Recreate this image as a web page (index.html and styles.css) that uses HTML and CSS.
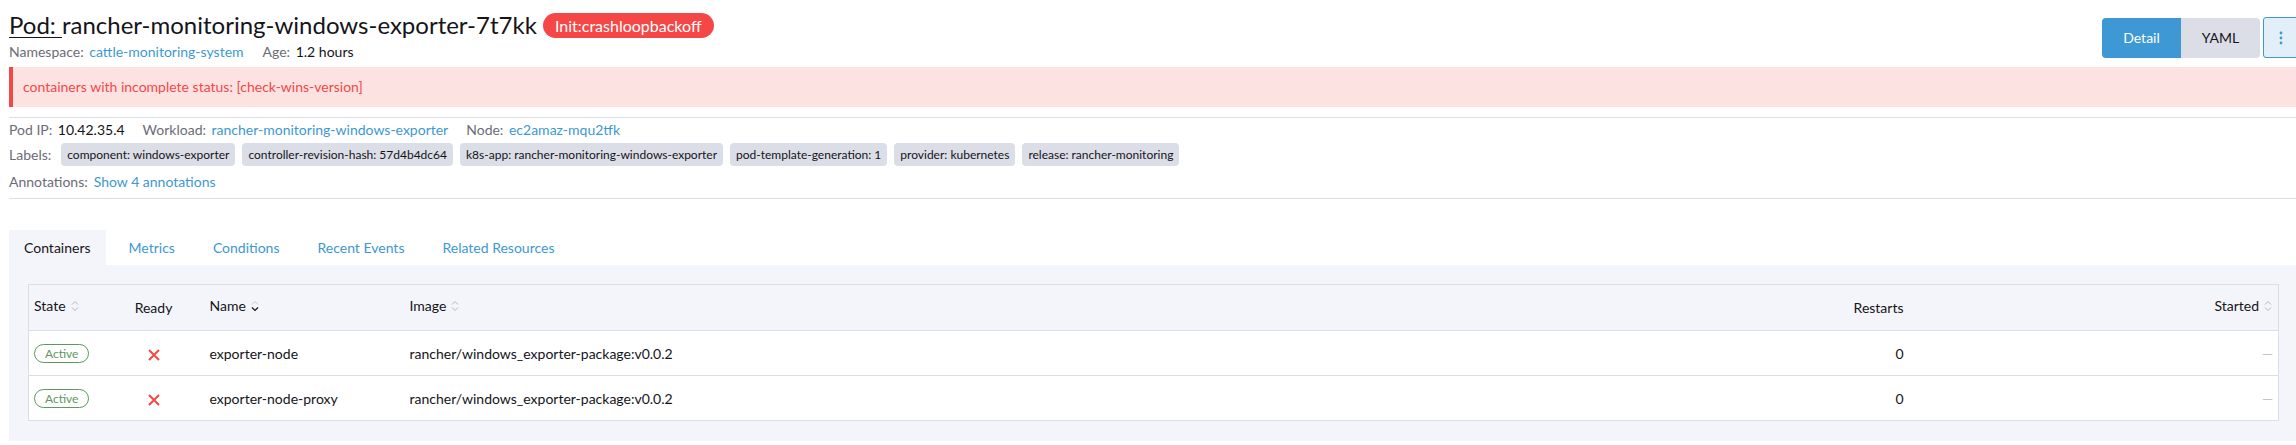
FILE: index.html
```html
<!DOCTYPE html>
<html lang="en">
<head>
<meta charset="utf-8">
<title>Pod: rancher-monitoring-windows-exporter-7t7kk</title>
<link rel="stylesheet" href="styles.css">
</head>
<body>
<div class="page">
  <header class="masthead">
    <div class="title-block">
      <h1 class="title"><a class="kind" href="#">Pod: </a>rancher-monitoring-windows-exporter-7t7kk<span class="badge">Init:crashloopbackoff</span></h1>
      <div class="subline">
        <span class="item"><span class="lbl">Namespace:</span> <a class="link" href="#">cattle-monitoring-system</a></span>
        <span class="item"><span class="lbl">Age:</span> 1.2 hours</span>
      </div>
    </div>
    <div class="actions">
      <div class="btn-group">
        <button class="seg seg-active">Detail</button>
        <button class="seg">YAML</button>
      </div>
      <button class="kebab" aria-label="More actions">
        <svg width="4" height="14" viewBox="0 0 4 14"><circle cx="2" cy="2" r="1.4" fill="#3d98d3"/><circle cx="2" cy="7" r="1.4" fill="#3d98d3"/><circle cx="2" cy="12" r="1.4" fill="#3d98d3"/></svg>
      </button>
    </div>
  </header>

  <div class="banner">containers with incomplete status: [check-wins-version]</div>

  <div class="rule"></div>

  <div class="details">
    <div class="drow">
      <span class="item"><span class="lbl">Pod IP:</span> <span>10.42.35.4</span></span>
      <span class="item"><span class="lbl">Workload:</span> <a class="link" href="#">rancher-monitoring-windows-exporter</a></span>
      <span class="item"><span class="lbl">Node:</span> <a class="link" href="#">ec2amaz-mqu2tfk</a></span>
    </div>
    <div class="drow labels">
      <span class="lbl">Labels:</span>
      <span class="chip">component: windows-exporter</span>
      <span class="chip">controller-revision-hash: 57d4b4dc64</span>
      <span class="chip">k8s-app: rancher-monitoring-windows-exporter</span>
      <span class="chip">pod-template-generation: 1</span>
      <span class="chip">provider: kubernetes</span>
      <span class="chip">release: rancher-monitoring</span>
    </div>
    <div class="drow annotations">
      <span class="lbl">Annotations:</span> <a class="link" href="#">Show 4 annotations</a>
    </div>
  </div>

  <div class="rule rule-2"></div>

  <nav class="tabs">
    <a class="tab tab-active" href="#">Containers</a>
    <a class="tab" href="#">Metrics</a>
    <a class="tab" href="#">Conditions</a>
    <a class="tab" href="#">Recent Events</a>
    <a class="tab" href="#">Related Resources</a>
  </nav>

  <section class="tab-body">
    <table class="grid">
      <colgroup>
        <col class="c-state"><col class="c-ready"><col class="c-name"><col><col class="c-restarts"><col class="c-started">
      </colgroup>
      <thead>
        <tr>
          <th><span class="th-in">State <svg class="sort" width="10" height="16" viewBox="0 0 10 16"><path d="M2 6.5 L5 3.5 L8 6.5" fill="none" stroke="#b4b5bd" stroke-width="1"/><path d="M2 9.5 L5 12.5 L8 9.5" fill="none" stroke="#b4b5bd" stroke-width="1"/></svg></span></th>
          <th class="center">Ready</th>
          <th><span class="th-in">Name <svg class="sort" width="10" height="16" viewBox="0 0 10 16"><path d="M2 6.5 L5 3.5 L8 6.5" fill="none" stroke="#c5c6cd" stroke-width="1"/><path d="M2 9.5 L5 12.5 L8 9.5" fill="none" stroke="#141419" stroke-width="1.2"/></svg></span></th>
          <th><span class="th-in">Image <svg class="sort" width="10" height="16" viewBox="0 0 10 16"><path d="M2 6.5 L5 3.5 L8 6.5" fill="none" stroke="#b4b5bd" stroke-width="1"/><path d="M2 9.5 L5 12.5 L8 9.5" fill="none" stroke="#b4b5bd" stroke-width="1"/></svg></span></th>
          <th class="right">Restarts</th>
          <th class="right"><span class="th-in">Started <svg class="sort" width="10" height="16" viewBox="0 0 10 16"><path d="M2 6.5 L5 3.5 L8 6.5" fill="none" stroke="#b4b5bd" stroke-width="1"/><path d="M2 9.5 L5 12.5 L8 9.5" fill="none" stroke="#b4b5bd" stroke-width="1"/></svg></span></th>
        </tr>
      </thead>
      <tbody>
        <tr>
          <td><span class="pill">Active</span></td>
          <td class="center"><svg width="12" height="12" viewBox="0 0 12 12"><path d="M1 1 L11 11 M11 1 L1 11" stroke="#f64747" stroke-width="2"/></svg></td>
          <td>exporter-node</td>
          <td>rancher/windows_exporter-package:v0.0.2</td>
          <td class="right">0</td>
          <td class="right muted">&mdash;</td>
        </tr>
        <tr>
          <td><span class="pill">Active</span></td>
          <td class="center"><svg width="12" height="12" viewBox="0 0 12 12"><path d="M1 1 L11 11 M11 1 L1 11" stroke="#f64747" stroke-width="2"/></svg></td>
          <td>exporter-node-proxy</td>
          <td>rancher/windows_exporter-package:v0.0.2</td>
          <td class="right">0</td>
          <td class="right muted">&mdash;</td>
        </tr>
      </tbody>
    </table>
  </section>
</div>
</body>
</html>
```

FILE: styles.css
```css
html, body {
  margin: 0;
  padding: 0;
  overflow: hidden;
  background: #ffffff;
}

body {
  font-family: Lato, "Open Sans", "Liberation Sans", sans-serif;
  font-size: 14px;
  color: #141419;
}

a {
  text-decoration: none;
}

.page {
  width: 2289px;
  padding-left: 9px;
}

/* ---------- masthead ---------- */
.masthead {
  display: flex;
  justify-content: space-between;
  align-items: flex-start;
  padding-top: 10px;
}

.title {
  margin: 0;
  font-size: 24px;
  line-height: 30px;
  font-weight: 400;
  display: flex;
  align-items: center;
}

.kind {
  color: #141419;
  text-decoration: underline;
  text-decoration-thickness: 1px;
  text-underline-offset: 3px;
  white-space: pre;
}

.badge {
  margin-left: 6px;
  background: #f64747;
  color: #ffffff;
  font-size: 16px;
  line-height: 21px;
  padding: 2px 12px;
  border-radius: 13px;
}

.subline {
  display: flex;
  gap: 19px;
  margin-top: 2px;
  line-height: 20px;
}

.lbl {
  color: #6c6c76;
}

.link {
  color: #3d98d3;
}

.actions {
  display: flex;
  align-items: center;
  margin-top: 7px;
  margin-right: -1px;
}

.btn-group {
  display: flex;
  border-radius: 4px;
  overflow: hidden;
}

.seg {
  width: 79px;
  height: 40px;
  border: 0;
  margin: 0;
  font-family: inherit;
  font-size: 14px;
  background: #dcdee7;
  color: #141419;
}

.seg-active {
  background: #3d98d3;
  color: #ffffff;
}

.kebab {
  margin-left: 3px;
  width: 36px;
  height: 41px;
  border: 1px solid #3d98d3;
  border-radius: 3px;
  background: #e3eff8;
  display: flex;
  align-items: center;
  justify-content: center;
  padding: 0;
}

/* ---------- banner ---------- */
.banner {
  margin-top: 5px;
  background: #fde2e2;
  border-left: 4px solid #f64747;
  color: #f64747;
  padding: 10px 10px;
  line-height: 20px;
}

.rule {
  height: 1px;
  background: #dcdee7;
  margin-top: 10px;
}

.rule-2 {
  margin-top: 6px;
}

/* ---------- details ---------- */
.details {
  display: flex;
  flex-direction: column;
  padding-top: 2px;
}

.drow {
  display: flex;
  align-items: center;
  gap: 18px;
  line-height: 20px;
}

.item .lbl {
  margin-right: 2px;
}

.labels {
  gap: 7px;
  margin-top: 3px;
  font-size: 14px;
}

.labels .lbl {
  margin-right: 3px;
}

.chip {
  background: #dcdee7;
  border-radius: 4px;
  padding: 0 6px;
  height: 23px;
  line-height: 23px;
  font-size: 12px;
  color: #141419;
}

.annotations {
  gap: 6px;
  margin-top: 6px;
}

/* ---------- tabs ---------- */
.tabs {
  display: flex;
  gap: 8px;
  margin-top: 31px;
}

.tab {
  display: block;
  padding: 0 15px;
  height: 35px;
  line-height: 35px;
  font-size: 14px;
  color: #3d98d3;
}

.tab-active {
  background: #f4f5fa;
  color: #141419;
}

.tab-body {
  background: #f4f5fa;
  padding: 19px 19px 20px;
}

/* ---------- table ---------- */
.grid {
  width: 100%;
  table-layout: fixed;
  border-collapse: collapse;
  border: 1px solid #dcdee7;
  background: #ffffff;
}

.c-state { width: 74px; }
.c-ready { width: 102px; }
.c-name { width: 200px; }
.c-restarts { width: 110px; }
.c-started { width: 370px; }

.grid th {
  background: #f4f5fa;
  font-weight: 400;
  text-align: left;
  height: 45px;
  padding: 0 5px;
  border-bottom: 1px solid #dcdee7;
}

.grid td {
  height: 44px;
  padding: 0 5px;
  border-bottom: 1px solid #dcdee7;
}

.th-in {
  display: inline-flex;
  align-items: center;
  gap: 4px;
  position: relative;
  top: -2px;
}

.sort {
  display: block;
}

.grid th.center,
.grid td.center {
  text-align: center;
}

.grid th.right,
.grid td.right {
  text-align: right;
}

.grid td.center svg {
  display: inline-block;
  vertical-align: middle;
}

.muted {
  color: #c4c5cc;
}

.pill {
  display: inline-block;
  border: 1px solid #5d995d;
  color: #5d995d;
  border-radius: 10px;
  font-size: 12px;
  line-height: 17px;
  padding: 0 10px;
}
```
